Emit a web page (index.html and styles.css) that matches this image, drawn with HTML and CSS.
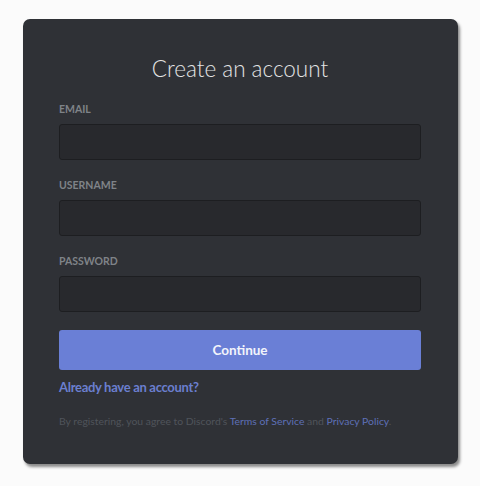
FILE: index.html
```html
<!DOCTYPE html>
<html lang="en">
<head>
<meta charset="utf-8">
<title>Create an account</title>
<link rel="stylesheet" href="styles.css">
</head>
<body>
<div class="page">
  <form class="card">
    <h1 class="title">Create an account</h1>
    <div class="field">
      <label class="label">EMAIL</label>
      <div class="input"></div>
    </div>
    <div class="field">
      <label class="label">USERNAME</label>
      <div class="input"></div>
    </div>
    <div class="field">
      <label class="label">PASSWORD</label>
      <div class="input"></div>
    </div>
    <button type="button" class="btn">Continue</button>
    <a class="login-link" href="#">Already have an account?</a>
    <p class="terms">By registering, you agree to Discord's <a href="#">Terms of Service</a> and <a href="#">Privacy Policy</a>.</p>
  </form>
</div>
</body>
</html>
```
FILE: styles.css
```css
html, body {
  margin: 0;
  padding: 0;
}
body {
  background: #fbfbfb;
  font-family: Lato, "Open Sans", sans-serif;
  width: 480px;
  height: 486px;
  overflow: hidden;
}
.page {
  padding: 19px 0 0 23px;
}
.card {
  box-sizing: border-box;
  width: 435px;
  height: 445px;
  background: #2f3136;
  border-radius: 7px;
  box-shadow: 2px 3px 3px rgba(0, 0, 0, 0.45);
  padding: 35px 37px 0 36px;
  display: flex;
  flex-direction: column;
}
.title {
  margin: 0 0 16px;
  font-size: 22.5px;
  line-height: 30px;
  font-weight: 300;
  color: #e3e4e5;
  text-align: center;
}
.field {
  display: flex;
  flex-direction: column;
  margin-bottom: 16px;
}
.field:last-of-type {
  margin-bottom: 18px;
}
.label {
  font-size: 10.5px;
  line-height: 18px;
  font-weight: 700;
  color: #7f8388;
  margin-bottom: 6px;
}
.input {
  box-sizing: border-box;
  height: 36px;
  background: #28292d;
  border: 1px solid #1d1e21;
  border-radius: 3px;
}
.btn {
  height: 40px;
  border: none;
  border-radius: 3px;
  background: #6a7fd6;
  color: #f2f4fb;
  font-family: inherit;
  font-size: 13.5px;
  font-weight: 700;
  padding: 0;
}
.login-link {
  margin-top: 7px;
  align-self: flex-start;
  font-size: 13px;
  line-height: 20px;
  font-weight: 700;
  letter-spacing: -0.3px;
  color: #6b7fcf;
  text-decoration: none;
}
.terms {
  margin: 17px 0 0;
  font-size: 10.4px;
  line-height: 14px;
  color: #50545b;
}
.terms a {
  color: #5e70b6;
  text-decoration: none;
}
```
